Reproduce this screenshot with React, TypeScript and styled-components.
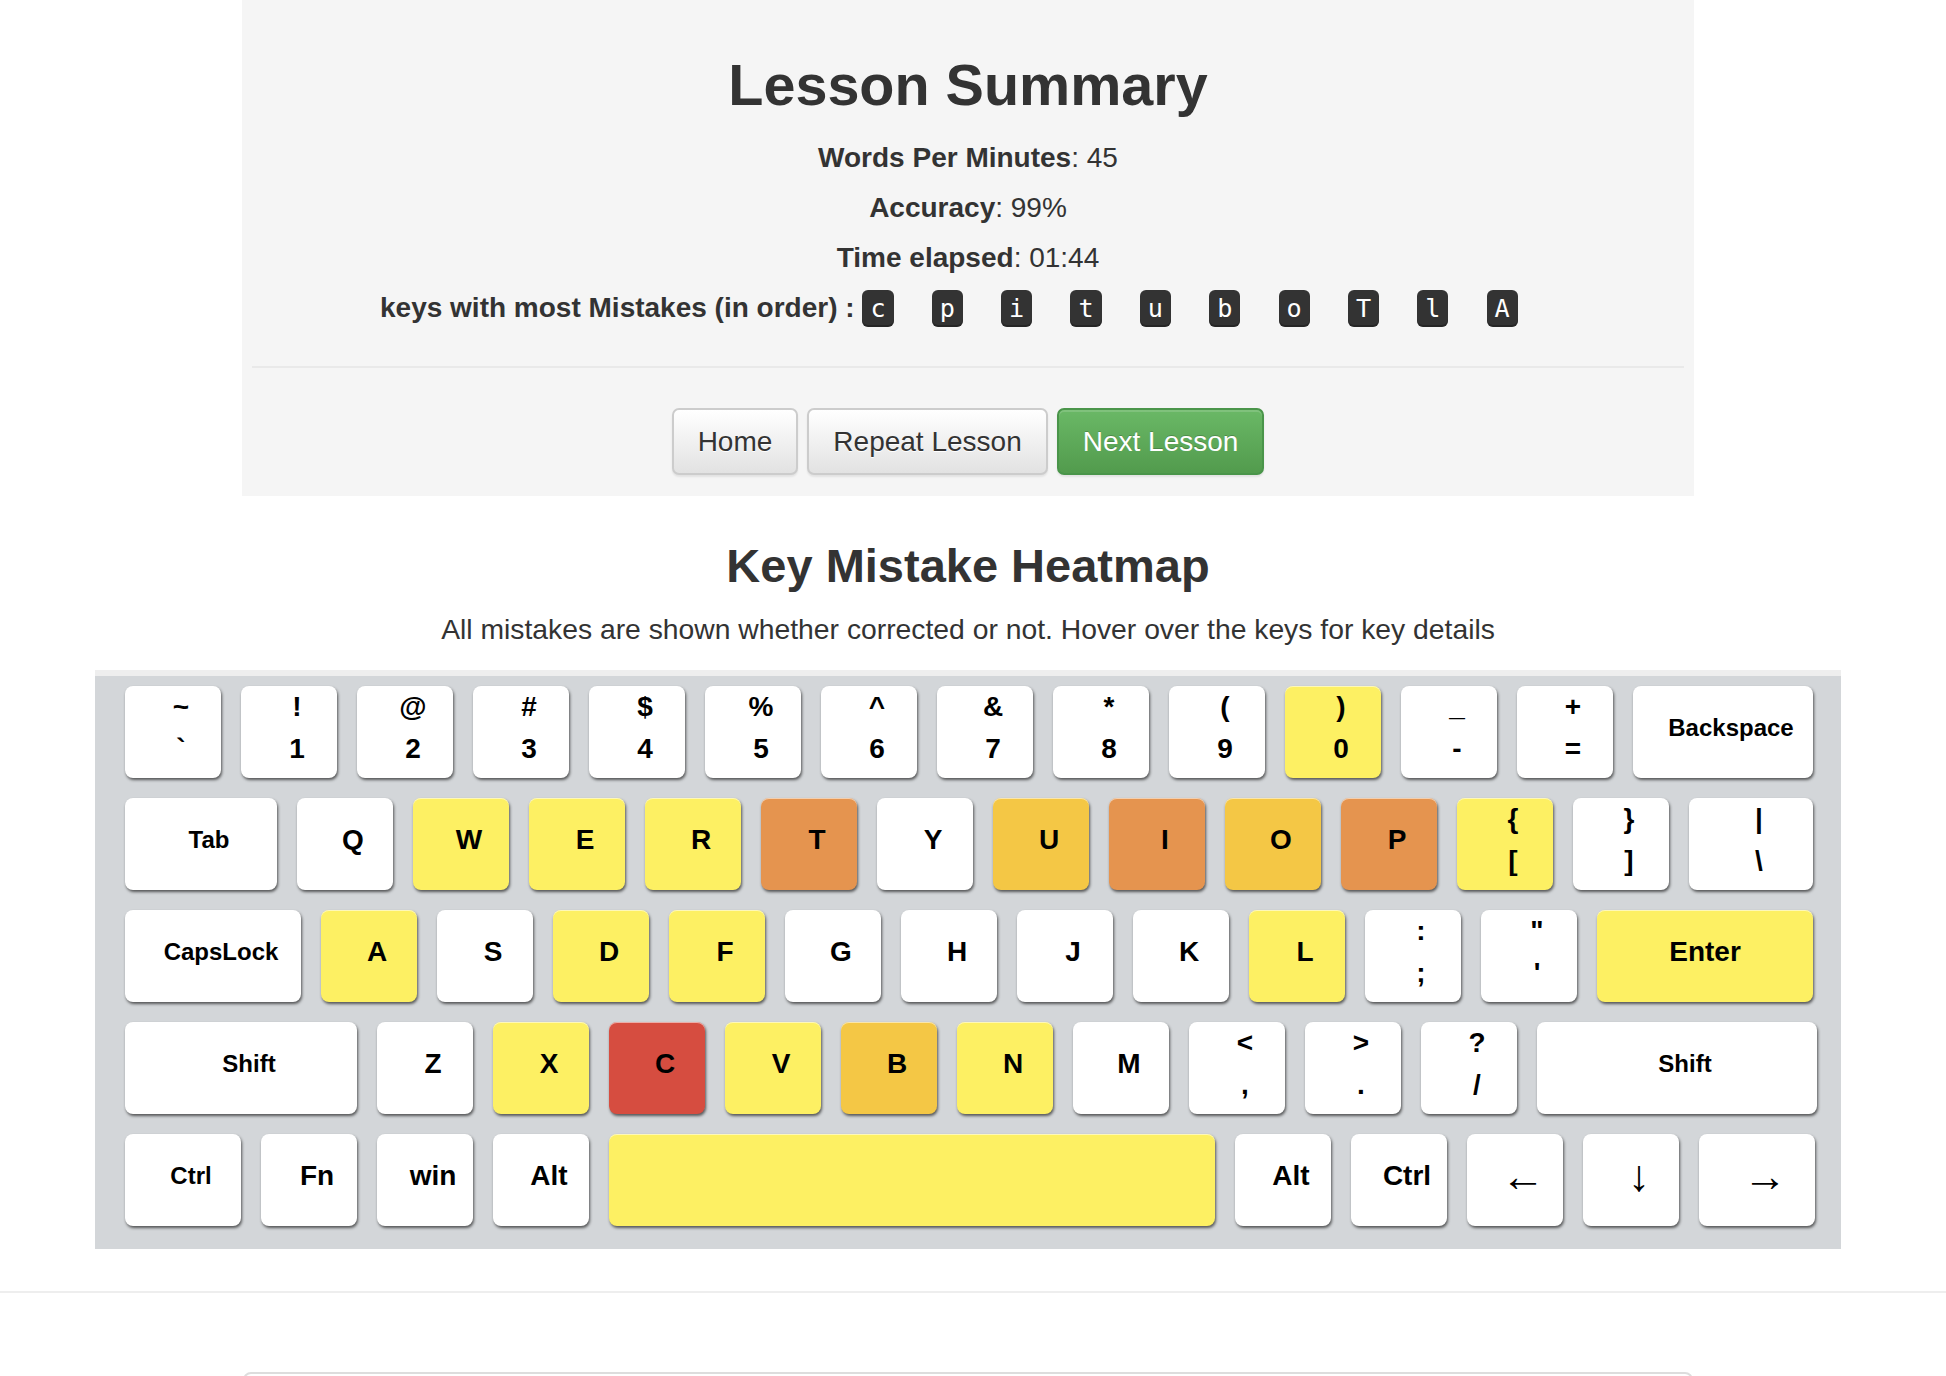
import React from "react";
import styled, { createGlobalStyle } from "styled-components";

const GlobalStyle = createGlobalStyle`
  html, body {
    margin: 0;
    padding: 0;
    background: #ffffff;
  }
  body {
    font-family: "Liberation Sans", Arial, Helvetica, sans-serif;
    color: #333333;
  }
  * { box-sizing: border-box; }
`;

type Heat = "none" | "low" | "mid" | "high" | "max";

const heatColors: Record<Heat, string> = {
  none: "#ffffff",
  low: "#fdf063",
  mid: "#f4c745",
  high: "#e5944f",
  max: "#d64d40",
};

type KeyDef = {
  top?: string;
  label: string;
  w?: number;
  heat?: Heat;
  small?: boolean;
  center?: boolean;
  arrow?: boolean;
};

const Page = styled.div`
  height: 100vh;
  overflow: hidden;
`;

const Centered = styled.div`
  padding-right: 10px;
  display: flex;
  flex-direction: column;
  align-items: center;
`;

const SummaryPanel = styled.section`
  width: 1452px;
  background: #f5f5f5;
  padding: 53px 10px 21px;
  text-align: center;
`;

const Title = styled.h1`
  margin: 0 0 20.6px;
  font-size: 57.5px;
  line-height: 64px;
  font-weight: 700;
  color: #333333;
`;

const StatLine = styled.p`
  margin: 0 0 10px;
  font-size: 28px;
  line-height: 40px;
  color: #333333;
`;

const Kbd = styled.kbd`
  display: inline;
  font-family: "DejaVu Sans Mono", Menlo, monospace;
  font-size: 25.2px;
  padding: 4px 8px;
  margin-right: 38.2px;
  color: #ffffff;
  background: #333333;
  border-radius: 6px;
  box-shadow: inset 0 -2px 0 rgba(0, 0, 0, 0.25);
`;

const Rule = styled.hr`
  margin: 37.4px 0 0;
  border: 0;
  border-top: 2px solid #e9e9e9;
`;

const ButtonRow = styled.div`
  display: flex;
  justify-content: center;
  gap: 9px;
  margin-top: 40px;
`;

const Button = styled.button<{ $primary?: boolean }>`
  font-family: "Liberation Sans", Arial, sans-serif;
  font-size: 28px;
  line-height: 39px;
  padding: 12px 24px;
  border-radius: 7px;
  border: 2px solid ${(p) => (p.$primary ? "#4a954a" : "#cccccc")};
  color: ${(p) => (p.$primary ? "#ffffff" : "#333333")};
  background-image: ${(p) =>
    p.$primary
      ? "linear-gradient(to bottom, #6ab866 0%, #529b4d 100%)"
      : "linear-gradient(to bottom, #ffffff 0%, #e2e2e2 100%)"};
  text-shadow: ${(p) =>
    p.$primary ? "0 -1px 0 rgba(0,0,0,0.2)" : "0 1px 0 #ffffff"};
  box-shadow: inset 0 2px 0 rgba(255, 255, 255, 0.15),
    0 2px 2px rgba(0, 0, 0, 0.075);
  cursor: pointer;
`;

const HeatTitle = styled.h2`
  margin: 43.7px 0 17px;
  font-size: 47px;
  line-height: 52px;
  font-weight: 700;
  color: #333333;
`;

const HeatSubtitle = styled.p`
  margin: 0 0 21px;
  font-size: 28.3px;
  line-height: 40px;
  color: #333333;
`;

const Keyboard = styled.div`
  width: 1746px;
  background: #d3d6d9;
  border-top: 6px solid #eeeeee;
  padding: 10px 28px 23px 30px;
  display: flex;
  flex-direction: column;
  gap: 20px;
`;

const KeyRow = styled.div`
  display: flex;
  gap: 20px;
`;

const Key = styled.div<{ $w: number; $heat: Heat; $center?: boolean }>`
  width: ${(p) => p.$w}px;
  height: 92px;
  flex: none;
  display: flex;
  flex-direction: column;
  justify-content: center;
  padding: 0 0 8px ${(p) => (p.$center ? 0 : 16)}px;
  text-align: center;
  background: ${(p) => heatColors[p.$heat]};
  border-radius: 8px;
  box-shadow: ${(p) =>
      p.$heat === "none" ? "" : "inset 0 1px 0 rgba(255,255,255,0.55),"}
    1px 2px 3px rgba(0, 0, 0, 0.6);
  cursor: default;
`;

const KeyLine = styled.span<{ $small?: boolean; $arrow?: boolean }>`
  display: block;
  font-family: "Liberation Sans", Arial, sans-serif;
  font-size: ${(p) => (p.$arrow ? 44 : p.$small ? 24 : 28)}px;
  font-weight: ${(p) => (p.$arrow ? 400 : 700)};
  line-height: 42px;
  color: #000000;
  white-space: nowrap;
`;

const Divider = styled.hr`
  margin: 42px 0 0;
  border: 0;
  border-top: 2px solid #eeeeee;
`;

const NextPanel = styled.div`
  width: 1450px;
  height: 160px;
  margin-top: 79px;
  border: 2px solid #dddddd;
  border-radius: 8px;
  background: #ffffff;
`;

const L = (label: string, heat: Heat = "none"): KeyDef => ({ label, heat });
const D = (top: string, label: string, heat: Heat = "none"): KeyDef => ({
  top,
  label,
  heat,
});

const rows: KeyDef[][] = [
  [
    D("~", "`"),
    D("!", "1"),
    D("@", "2"),
    D("#", "3"),
    D("$", "4"),
    D("%", "5"),
    D("^", "6"),
    D("&", "7"),
    D("*", "8"),
    D("(", "9"),
    D(")", "0", "low"),
    D("_", "-"),
    D("+", "="),
    { label: "Backspace", w: 180, small: true },
  ],
  [
    { label: "Tab", w: 152, small: true },
    L("Q"),
    L("W", "low"),
    L("E", "low"),
    L("R", "low"),
    L("T", "high"),
    L("Y"),
    L("U", "mid"),
    L("I", "high"),
    L("O", "mid"),
    L("P", "high"),
    D("{", "[", "low"),
    D("}", "]"),
    { top: "|", label: "\\", w: 124 },
  ],
  [
    { label: "CapsLock", w: 176, small: true },
    L("A", "low"),
    L("S"),
    L("D", "low"),
    L("F", "low"),
    L("G"),
    L("H"),
    L("J"),
    L("K"),
    L("L", "low"),
    D(":", ";"),
    D('"', "'"),
    { label: "Enter", w: 216, heat: "low", center: true },
  ],
  [
    { label: "Shift", w: 232, small: true },
    L("Z"),
    L("X", "low"),
    L("C", "max"),
    L("V", "low"),
    L("B", "mid"),
    L("N", "low"),
    L("M"),
    D("<", ","),
    D(">", "."),
    D("?", "/"),
    { label: "Shift", w: 280, small: true },
  ],
  [
    { label: "Ctrl", w: 116, small: true },
    L("Fn"),
    L("win"),
    L("Alt"),
    { label: "", w: 606, heat: "low" },
    L("Alt"),
    L("Ctrl"),
    { label: "←", arrow: true },
    { label: "↓", arrow: true },
    { label: "→", w: 116, arrow: true },
  ],
];

const mistakeKeys = ["c", "p", "i", "t", "u", "b", "o", "T", "l", "A"];

export default function App() {
  return (
    <Page>
      <GlobalStyle />
      <Centered>
        <SummaryPanel>
          <Title>Lesson Summary</Title>
          <StatLine>
            <b>Words Per Minutes</b>: 45
          </StatLine>
          <StatLine>
            <b>Accuracy</b>: 99%
          </StatLine>
          <StatLine>
            <b>Time elapsed</b>: 01:44
          </StatLine>
          <StatLine>
            <b>keys with most Mistakes (in order) :</b>{" "}
            {mistakeKeys.map((k, i) => (
              <Kbd key={i}>{k}</Kbd>
            ))}
          </StatLine>
          <Rule />
          <ButtonRow>
            <Button>Home</Button>
            <Button>Repeat Lesson</Button>
            <Button $primary>Next Lesson</Button>
          </ButtonRow>
        </SummaryPanel>
        <HeatTitle>Key Mistake Heatmap</HeatTitle>
        <HeatSubtitle>
          All mistakes are shown whether corrected or not. Hover over the keys
          for key details
        </HeatSubtitle>
        <Keyboard>
          {rows.map((row, ri) => (
            <KeyRow key={ri}>
              {row.map((k, ki) => (
                <Key
                  key={ki}
                  $w={k.w ?? 96}
                  $heat={k.heat ?? "none"}
                  $center={k.center}
                  title={k.label || "Space"}
                >
                  {k.top !== undefined && <KeyLine>{k.top}</KeyLine>}
                  <KeyLine $small={k.small} $arrow={k.arrow}>
                    {k.label}
                  </KeyLine>
                </Key>
              ))}
            </KeyRow>
          ))}
        </Keyboard>
      </Centered>
      <Divider />
      <Centered>
        <NextPanel />
      </Centered>
    </Page>
  );
}
